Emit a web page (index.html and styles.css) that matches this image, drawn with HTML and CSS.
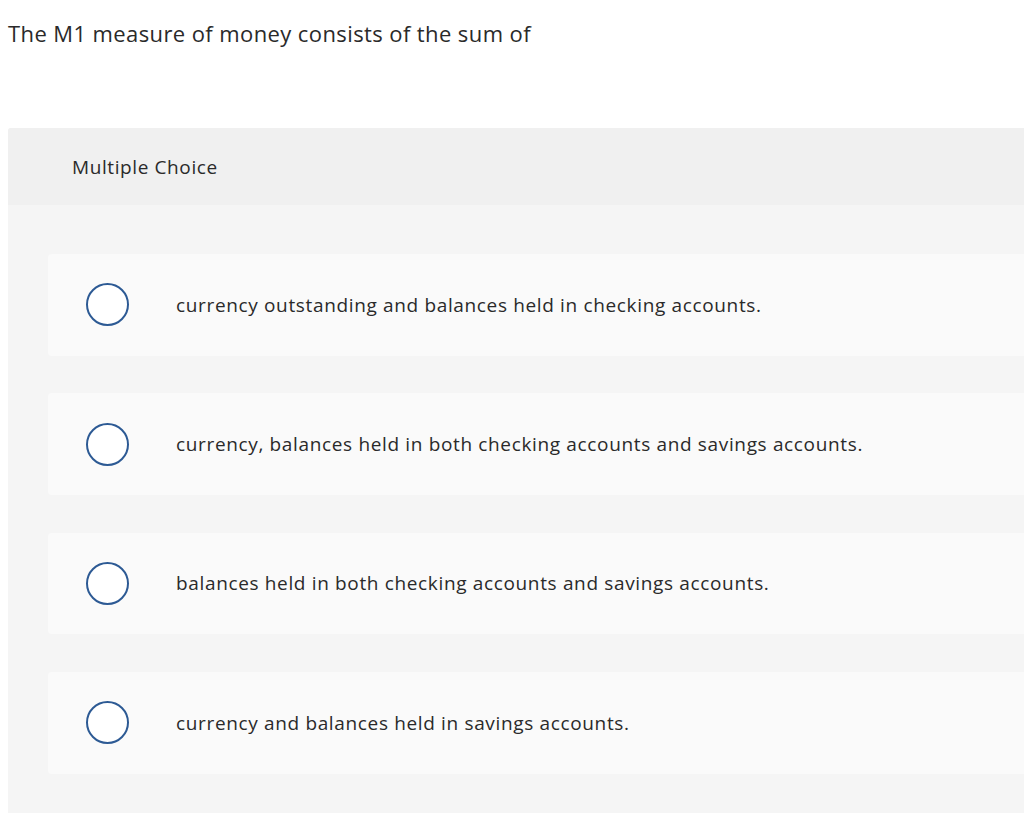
FILE: index.html
```html
<!DOCTYPE html>
<html>
<head>
<meta charset="utf-8">
<link rel="stylesheet" href="styles.css">
</head>
<body>
<div class="page">
  <p class="question">The M1 measure of money consists of the sum of</p>
  <div class="panel">
    <div class="panel-head">Multiple Choice</div>
    <div class="options">
      <div class="option"><span class="radio"></span><span class="label">currency outstanding and balances held in checking accounts.</span></div>
      <div class="option"><span class="radio"></span><span class="label">currency, balances held in both checking accounts and savings accounts.</span></div>
      <div class="option"><span class="radio"></span><span class="label">balances held in both checking accounts and savings accounts.</span></div>
      <div class="option"><span class="radio"></span><span class="label">currency and balances held in savings accounts.</span></div>
    </div>
  </div>
</div>
</body>
</html>
```

FILE: styles.css
```css
html, body {
  margin: 0;
  padding: 0;
  overflow: hidden;
  background: #ffffff;
}
.page {
  padding-left: 8px;
  font-family: "Open Sans", "Lato", sans-serif;
  color: #2a2a2a;
}
.question {
  margin: 0;
  padding-top: 18px;
  height: 128px;
  box-sizing: border-box;
  font-size: 22px;
  line-height: 30px;
  letter-spacing: 0.4px;
}
.panel {
  width: 1040px;
  background: #f5f5f5;
  border-radius: 3px 0 0 0;
  padding-bottom: 40px;
}
.panel-head {
  height: 77px;
  background: #f0f0f0;
  border-radius: 3px 0 0 0;
  padding-left: 64px;
  display: flex;
  align-items: center;
  font-size: 19px;
  letter-spacing: 0.6px;
}
.options {
  padding: 49px 0 0 40px;
  display: flex;
  flex-direction: column;
  gap: 37.67px;
}
.option {
  height: 101.67px;
  background: #fafafa;
  border-radius: 4px 0 0 4px;
  display: flex;
  align-items: center;
  padding-left: 38px;
}
.radio {
  width: 39px;
  height: 39px;
  border: 2px solid #2d5a94;
  border-radius: 50%;
  background: #ffffff;
  flex: none;
}
.label {
  margin-left: 47px;
  font-size: 19px;
  letter-spacing: 0.65px;
}
```
